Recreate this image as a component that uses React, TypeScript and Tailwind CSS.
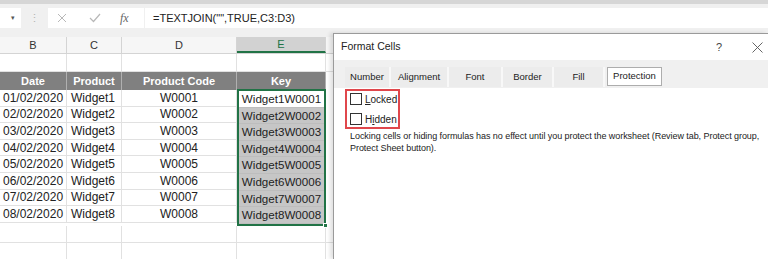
import React from "react";

const cols = [
  { key: "B", w: "w-[67px]" },
  { key: "C", w: "w-[55px]" },
  { key: "D", w: "w-[115px]" },
  { key: "E", w: "w-[89px]" },
];

const rows = [1, 2, 3, 4, 5, 6, 7, 8].map((n) => ({
  date: `0${n}/02/2020`,
  product: `Widget${n}`,
  code: `W000${n}`,
  key: `Widget${n}W000${n}`,
}));

const tabs = [
  { name: "Number", w: "w-[46px]" },
  { name: "Alignment", w: "w-[58px]" },
  { name: "Font", w: "w-[54px]" },
  { name: "Border", w: "w-[51px]" },
  { name: "Fill", w: "w-[51px]" },
];

function FormulaBar() {
  return (
    <div className="h-[37px] bg-[#f0f0f0] border-t-[4px] border-[#d6d6d6] flex items-start pt-[4px]">
      <div className="w-[21px] h-[20px] bg-white flex items-center justify-end pr-[6px] text-[7px] text-[#555]">▾</div>
      <div className="w-[27px] h-[20px] flex items-center justify-center text-[#b5b5b5] text-[11px] leading-none">⋮</div>
      <div className="w-[96px] h-[20px] bg-white flex items-center text-[#b0b0b0]">
        <svg width="10" height="10" viewBox="0 0 10 10" className="ml-[9px]">
          <path d="M1 1L9 9M9 1L1 9" stroke="#b8b8b8" strokeWidth="1" />
        </svg>
        <svg width="12" height="10" viewBox="0 0 12 10" className="ml-[22px]">
          <path d="M1 5L4.5 8.5L11 1" stroke="#b8b8b8" strokeWidth="1.2" fill="none" />
        </svg>
        <span className="ml-[19px] text-[12px] italic text-[#666]" style={{ fontFamily: '"Liberation Serif", serif' }}>fx</span>
      </div>
      <div className="flex-1 h-[20px] bg-white ml-[1px] flex items-center pl-[8px] text-[11px] text-[#222]">
        =TEXTJOIN("",TRUE,C3:D3)
      </div>
    </div>
  );
}

function Sheet() {
  return (
    <div className="w-[333px] flex flex-col">
      {/* column headers */}
      <div className="h-[17px] flex bg-[#f6f6f6] border-b border-[#d4d4d4]">
        {cols.map((c) => (
          <div
            key={c.key}
            className={`${c.w} flex items-center justify-center border-r border-[#d4d4d4] text-[11px] ${
              c.key === "E" ? "bg-[#d2d2d2] text-[#217346] border-b-2 border-b-[#217346]" : "text-[#333]"
            }`}
          >
            {c.key}
          </div>
        ))}
        <div className="flex-1" />
      </div>
      {/* row 1 empty */}
      <div className="h-[18px] flex border-b border-[#e1e1e1]">
        {cols.map((c) => (
          <div key={c.key} className={`${c.w} border-r border-[#e1e1e1]`} />
        ))}
      </div>
      {/* table header */}
      <div className="h-[18px] flex bg-[#808080] text-white font-bold text-[11px]">
        <div className="w-[67px] flex items-center justify-center border-r border-[#b0b0b0]">Date</div>
        <div className="w-[55px] flex items-center justify-center border-r border-[#b0b0b0]">Product</div>
        <div className="w-[115px] flex items-center justify-center border-r border-[#b0b0b0]">Product Code</div>
        <div className="w-[89px] flex items-center justify-center border-r border-[#b0b0b0]">Key</div>
        <div className="flex-1 bg-white" />
      </div>
      {/* data */}
      <div className="flex">
        <div className="flex flex-col">
          {rows.map((r) => (
            <div key={r.date} className="h-[16.6px] flex border-b border-[#e1e1e1] text-[12px] text-[#222] leading-none">
              <div className="w-[67px] flex items-center pl-[3px] border-r border-[#e1e1e1]">{r.date}</div>
              <div className="w-[55px] flex items-center pl-[4px] border-r border-[#e1e1e1]">{r.product}</div>
              <div className="w-[115px] flex items-center justify-center border-r border-[#e1e1e1]">{r.code}</div>
            </div>
          ))}
        </div>
        <div className="relative w-[89px] flex flex-col border-2 border-[#217346] -mt-[1px]">
          {rows.map((r, i) => (
            <div
              key={r.key}
              className={`h-[16.6px] flex items-center justify-center text-[11.6px] text-[#222] leading-none border-b border-[#bdbdbd] ${
                i === 0 ? "bg-white" : "bg-[#c6c6c6]"
              }`}
            >
              {r.key}
            </div>
          ))}
          <div className="absolute -right-[4px] -bottom-[4px] w-[5px] h-[5px] bg-[#217346] border border-white" />
        </div>
      </div>
      {[0, 1].map((k) => (
        <div key={k} className="h-[17px] flex border-b border-[#e1e1e1]">
          {cols.map((c) => (
            <div key={c.key} className={`${c.w} border-r border-[#e1e1e1]`} />
          ))}
        </div>
      ))}
    </div>
  );
}

function Dialog() {
  return (
    <div className="absolute left-[333px] top-[33px] right-0 bottom-0 bg-white border-l border-t border-[#9a9a9a] shadow-[-3px_0_4px_rgba(0,0,0,0.12)] text-[#222]">
      <div className="h-[26px] flex items-center pl-[7px] text-[10.5px]">
        <span>Format Cells</span>
        <span className="ml-auto mr-[30px] text-[11px] text-[#444]">?</span>
        <svg width="11" height="11" viewBox="0 0 11 11" className="mr-[5px]">
          <path d="M0.5 0.5L10.5 10.5M10.5 0.5L0.5 10.5" stroke="#555" strokeWidth="0.9" />
        </svg>
      </div>
      <div className="h-[28px] bg-[#f0f0f0] flex items-end pl-[11px] pb-[1px]">
        {tabs.map((t) => (
          <div
            key={t.name}
            className={`${t.w} h-[20px] flex items-center justify-center text-[9.5px] border-r-2 border-[#f8f8f8] bg-[#ececec]`}
          >
            {t.name}
          </div>
        ))}
        <div className="w-[55px] h-[19px] ml-[2px] mb-[1px] flex items-center justify-center text-[9.5px] bg-white border border-[#adadad]">
          Protection
        </div>
      </div>
      <div className="pl-[11px] pt-[1px]">
        <div className="w-[55px] h-[40px] border-2 border-[#e0474c] flex flex-col justify-center gap-[5px] pl-[3px] text-[10px]">
          <label className="flex items-center gap-[3px]">
            <span className="w-[12px] h-[12px] border border-[#333] bg-white" />
            <span><span className="underline">L</span>ocked</span>
          </label>
          <label className="flex items-center gap-[3px]">
            <span className="w-[12px] h-[12px] border border-[#333] bg-white" />
            <span>H<span className="underline">i</span>dden</span>
          </label>
        </div>
        <p className="pl-[5px] pt-[1px] text-[9px] tracking-[-0.06px] leading-[12px] whitespace-nowrap">
          Locking cells or hiding formulas has no effect until you protect the worksheet (Review tab, Protect group,
          <br />
          Protect Sheet button).
        </p>
      </div>
    </div>
  );
}

export default function App() {
  return (
    <div
      className="relative w-[768px] h-[259px] overflow-hidden bg-white"
      style={{ fontFamily: '"Liberation Sans", Arial, sans-serif' }}
    >
      <FormulaBar />
      <div className="flex">
        <Sheet />
        <div className="flex-1" />
      </div>
      <Dialog />
    </div>
  );
}
